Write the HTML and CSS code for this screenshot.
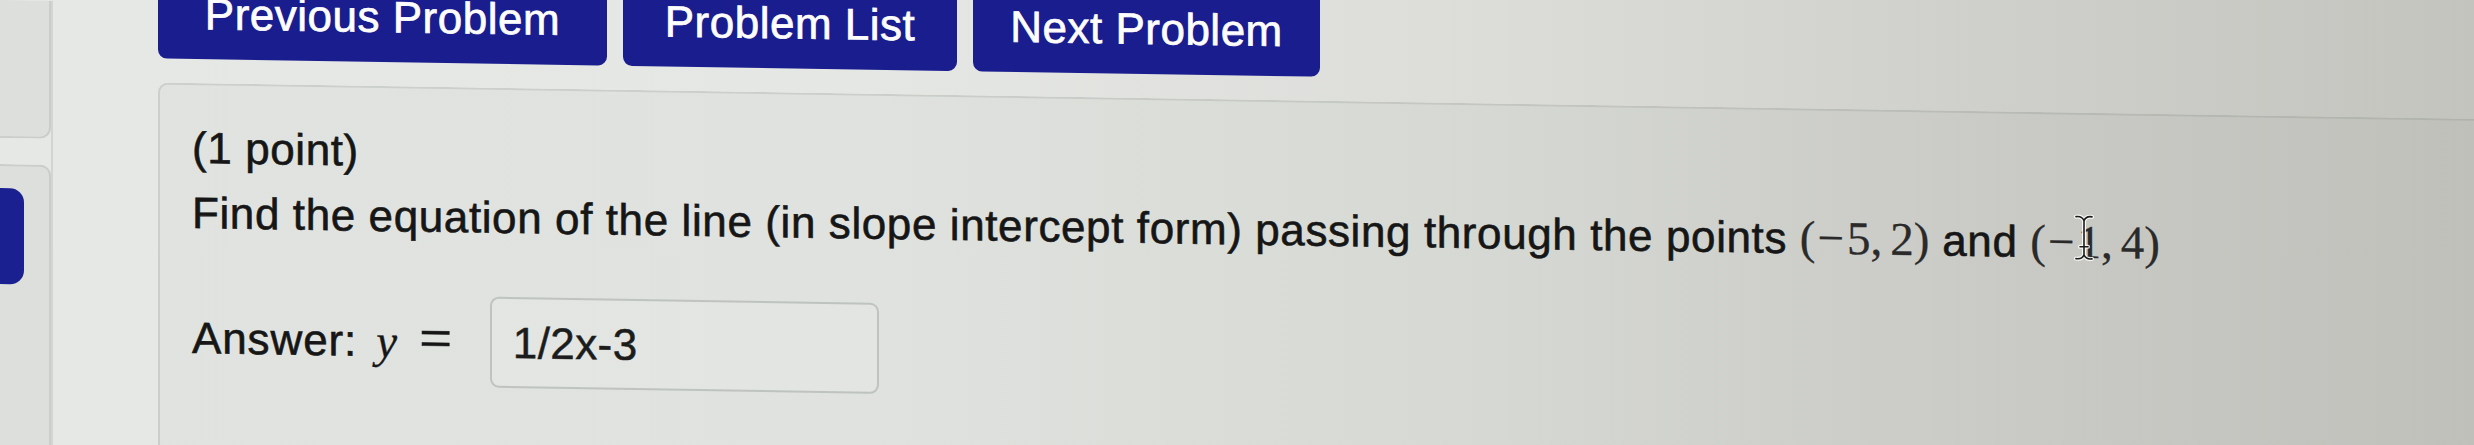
FILE: index.html
```html
<!DOCTYPE html>
<html lang="en">
<head>
<meta charset="utf-8">
<title>Problem</title>
<link rel="stylesheet" href="styles.css">
</head>
<body>
<div class="page">
  <aside class="sidebar">
    <div class="side-card side-top"></div>
    <div class="side-card side-lower"><span class="side-btn"></span></div>
  </aside>
  <main class="main">
    <nav class="nav">
      <a class="btn btn-prev">Previous Problem</a>
      <a class="btn btn-list">Problem List</a>
      <a class="btn btn-next">Next Problem</a>
    </nav>
    <section class="problem">
      <p class="line points">(1 point)</p>
      <p class="line question">Find the equation of the line (in slope intercept form) passing through the points <span class="math">(<span class="minus">−</span>5,<span class="thin"></span>2)</span> and <span class="math">(<span class="minus">−</span><span class="cursor-host">1<svg class="ibeam" viewBox="0 0 22 48" aria-hidden="true"><g fill="none" stroke-linecap="round"><path class="halo" d="M3 3 Q9 2 11 7 Q13 2 19 3 M11 7 V41 M3 45 Q9 46 11 41 Q13 46 19 45 M7 33 H15"/><path class="beam" d="M3 3 Q9 2 11 7 Q13 2 19 3 M11 7 V41 M3 45 Q9 46 11 41 Q13 46 19 45 M7 33 H15"/></g></svg></span>,<span class="thin"></span>4)</span></p>
      <div class="answer">
        <span class="label">Answer:</span>
        <span class="math eq"><i class="var">y</i><span class="rel">=</span></span>
        <input class="field" type="text" value="1/2x-3">
      </div>
    </section>
  </main>
</div>
</body>
</html>
```

FILE: styles.css
```css
html {
  background: linear-gradient(90deg, #e6e8e5 0%, #e5e7e4 35%, #dcddd9 60%, #cfcfcb 80%, #c4c4bf 100%);
  height: 100%;
}
body {
  margin: 0;
  height: 100%;
  overflow: hidden;
  font-family: "Liberation Sans", Arial, Helvetica, sans-serif;
  color: #161616;
}
.page {
  display: flex;
  height: 520px;
  transform: skewY(0.9deg);
  transform-origin: 0 0;
}
.sidebar {
  width: 51px;
  flex: none;
  display: flex;
  flex-direction: column;
  gap: 26px;
  border-right: 2px solid rgba(120, 125, 120, 0.18);
}
.side-card {
  background: rgba(110, 115, 110, 0.07);
  border: 2px solid rgba(110, 115, 110, 0.16);
  border-left: none;
}
.side-top {
  height: 136px;
  border-top: none;
  border-radius: 0 0 11px 0;
}
.side-lower {
  flex: 1;
  border-bottom: none;
  border-radius: 0 11px 0 0;
  padding-top: 22px;
}
.side-btn {
  display: block;
  width: 24px;
  height: 96px;
  background: #1b2090;
  border-radius: 0 14px 14px 0;
}
.main {
  flex: 1;
  margin-left: 105px;
  display: flex;
  flex-direction: column;
}
.nav {
  display: flex;
  gap: 16px;
  margin-top: -35px;
}
.btn {
  display: flex;
  justify-content: center;
  box-sizing: border-box;
  padding: 14px 0;
  font-size: 44px;
  line-height: 63px;
  color: #ffffff;
  background: #1a1d8e;
  border-radius: 9px;
  text-decoration: none;
  letter-spacing: 0.5px;
  -webkit-text-stroke: 0.7px #ffffff;
}
.btn-prev { width: 449px; }
.btn-list { width: 334px; }
.btn-next { width: 347px; }
.problem {
  margin-top: 24px;
  flex: 1;
  background: rgba(100, 110, 100, 0.045);
  border: 2px solid rgba(100, 105, 100, 0.16);
  border-right: none;
  border-bottom: none;
  border-radius: 10px 0 0 0;
  padding: 31px 0 0 32px;
}
.line {
  margin: 0;
  font-size: 44px;
  line-height: 64px;
  letter-spacing: 0.6px;
  white-space: nowrap;
  -webkit-text-stroke: 0.6px #161616;
}
.math {
  font-family: "Liberation Serif", "Times New Roman", serif;
  font-size: 47px;
  letter-spacing: 0;
  -webkit-text-stroke: 0.3px #2a2a2a;
  color: #2a2a2a;
}
.minus {
  margin: 0 3px 0 2px;
}
.thin {
  display: inline-block;
  width: 8px;
}
.cursor-host {
  position: relative;
}
.ibeam {
  position: absolute;
  left: -4px;
  top: -2px;
  width: 22px;
  height: 48px;
}
.ibeam .halo {
  stroke: rgba(255, 255, 255, 0.85);
  stroke-width: 4;
}
.ibeam .beam {
  stroke: #1a1a1a;
  stroke-width: 1.6;
}
.answer {
  display: flex;
  align-items: center;
  margin-top: 47px;
  font-size: 44px;
  letter-spacing: 0.9px;
}
.label {
  -webkit-text-stroke: 0.6px #161616;
}
.eq {
  margin-left: 19px;
  display: flex;
  align-items: baseline;
  color: #161616;
}
.var {
  font-style: italic;
}
.rel {
  margin-left: 22px;
  font-size: 58px;
  line-height: 50px;
  -webkit-text-stroke: 0.8px #161616;
}
.field {
  margin-left: 38px;
  box-sizing: border-box;
  width: 389px;
  height: 91px;
  padding: 0 21px;
  border: 2px solid rgba(110, 115, 110, 0.3);
  border-radius: 9px;
  background: rgba(255, 255, 255, 0.12);
  font-family: "Liberation Sans", Arial, Helvetica, sans-serif;
  font-size: 44px;
  letter-spacing: 0.4px;
  color: #1c1c1c;
  -webkit-text-stroke: 0.5px #1c1c1c;
  outline: none;
}
```
